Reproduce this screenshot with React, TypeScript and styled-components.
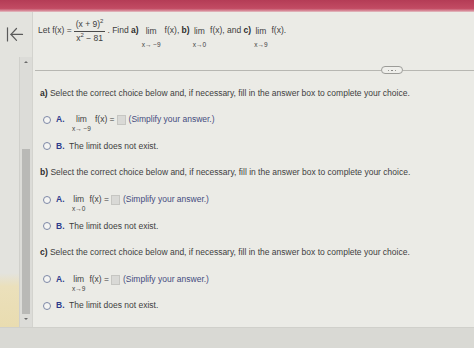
import React from "react";
import styled, { createGlobalStyle } from "styled-components";

const Global = createGlobalStyle`
  html, body { margin: 0; padding: 0; }
  body {
    width: 474px; height: 348px; overflow: hidden;
    background: #ebebe6;
    font-family: "Liberation Sans", Arial, sans-serif;
  }
`;

const Screen = styled.div`
  display: flex;
  flex-direction: column;
  width: 474px;
  height: 348px;
`;

const TopBar = styled.div`
  flex: none;
  height: 12px;
  background: linear-gradient(to bottom, #b43c56 0%, #c24b63 70%, #d98e9c 90%, #e3c3c6 100%);
`;

const Body = styled.div`
  flex: 1;
  display: flex;
  min-height: 0;
`;

const Sidebar = styled.div`
  flex: none;
  width: 32px;
  display: flex;
  flex-direction: column;
  background: #e3e3de;
  border-right: 1px solid #d3d3ce;
`;

const BackArea = styled.div`
  height: 45px;
  flex: none;
  padding: 15px 0 0 6px;
  box-sizing: border-box;
`;

const Lower = styled.div`
  flex: 1;
  display: flex;
`;

const Tint = styled.div`
  flex: 1;
  background: linear-gradient(to bottom, #e3e3de 0%, #e3e3de 80%, #ebe0bb 85%, #e9dcb0 100%);
`;

const Track = styled.div`
  width: 12px;
  flex: none;
  display: flex;
  flex-direction: column;
  align-items: center;
  background: #dcdcd8;
  border-left: 1px solid #d0d0cb;
  padding-bottom: 3px;
`;

const ArrowBtn = styled.div<{ $down?: boolean }>`
  height: 10px;
  width: 100%;
  display: flex;
  align-items: center;
  justify-content: center;
  &::after {
    content: "";
    border-left: 2px solid transparent;
    border-right: 2px solid transparent;
    ${(p) => (p.$down ? "border-top: 2px solid #6a6a6a;" : "border-bottom: 2px solid #6a6a6a;")}
  }
`;

const Thumb = styled.div`
  flex: 1;
  width: 8px;
  margin-top: 82px;
  background: #b9b9b6;
`;

const Main = styled.div`
  flex: 1;
  display: flex;
  flex-direction: column;
  padding: 7px 0 0 5px;
  color: #3e3e3e;
  font-size: 8.5px;
  line-height: 10px;
  min-width: 0;
`;

const QuestionLine = styled.div`
  height: 30px;
  display: flex;
  align-items: center;
  white-space: nowrap;
`;

const Frac = styled.span`
  display: inline-flex;
  flex-direction: column;
  align-items: stretch;
  vertical-align: middle;
  margin: 0 2px 0 2px;
  text-align: center;
`;

const FracPart = styled.span`
  line-height: 10px;
  padding: 0 2px;
`;

const FracBar = styled.span`
  height: 1px;
  background: #4a4a4a;
  margin: 2px 0 1px;
`;

const Sup = styled.sup`
  font-size: 6px;
  vertical-align: 4px;
  line-height: 0;
`;

const Lim = styled.span<{ $gap: number }>`
  display: inline-flex;
  flex-direction: column;
  align-items: center;
  margin: 0 4px 0 3px;
  & > span:last-child {
    margin-top: ${(p) => p.$gap}px;
  }
`;

const LimWord = styled.span`
  line-height: 10px;
`;

const LimSub = styled.span`
  font-size: 6.5px;
  line-height: 7px;
  white-space: nowrap;
`;

const Bold = styled.b`
  font-weight: 700;
  color: #2e2e2e;
`;

const Divider = styled.div`
  display: flex;
  align-items: center;
  height: 9px;
  margin: 18px 0 0 -3px;
`;

const Rule = styled.div<{ $w?: number }>`
  height: 1px;
  background: #b7b7b2;
  ${(p) => (p.$w ? `width: ${p.$w}px; flex: none;` : "flex: 1;")}
`;

const Pill = styled.div`
  flex: none;
  width: 20px;
  height: 6px;
  border: 1px solid #9c9c98;
  border-radius: 4px;
  display: flex;
  align-items: center;
  justify-content: center;
  gap: 2px;
  background: #efefeb;
  & > i {
    width: 1.5px;
    height: 1.5px;
    background: #7c7c78;
    border-radius: 50%;
  }
`;

const Parts = styled.div`
  margin-top: 13px;
  display: grid;
  grid-auto-rows: 26.6px;
  padding-left: 2px;
`;

const Heading = styled.div`
  white-space: nowrap;
`;

const Option = styled.div`
  display: flex;
  align-items: flex-start;
  padding-left: 3px;
  white-space: nowrap;
`;

const Radio = styled.span`
  flex: none;
  width: 6px;
  height: 6px;
  margin-top: 1.5px;
  border: 1px solid #7d88a6;
  border-radius: 50%;
  background: #f4f4f2;
`;

const Letter = styled.span`
  flex: none;
  width: 13px;
  margin-left: 5px;
  font-weight: 700;
  color: #2d3b8c;
`;

const Expr = styled.span`
  line-height: 10px;
`;

const Box = styled.span`
  display: inline-block;
  width: 9px;
  height: 10px;
  box-sizing: border-box;
  vertical-align: middle;
  margin: 0 3px 0 2px;
  background: #d9d9d6;
  border: 1px solid #c6c6c2;
`;

const Hint = styled.span`
  color: #454c80;
`;

const BottomBand = styled.div`
  flex: none;
  height: 20px;
  background: #d9d9d4;
  border-top: 1px solid #d0d0cb;
`;

const BackIcon = () => (
  <svg width="18" height="15" viewBox="0 0 18 15" fill="none" stroke="#5a5a5a" strokeWidth="1.2" strokeLinecap="round">
    <line x1="1.5" y1="0.8" x2="1.5" y2="14" />
    <line x1="5" y1="7.4" x2="16.5" y2="7.4" />
    <polyline points="10.5,1.5 5,7.4 10.5,13.3" />
  </svg>
);

const LimExpr = ({ sub, gap }: { sub: string; gap: number }) => (
  <Lim $gap={gap}>
    <LimWord>lim</LimWord>
    <LimSub>{sub}</LimSub>
  </Lim>
);

const parts = [
  { key: "a)", sub: "x\u2192 \u22129" },
  { key: "b)", sub: "x\u21920" },
  { key: "c)", sub: "x\u21929" },
];

export default function App() {
  return (
    <Screen>
      <Global />
      <TopBar />
      <Body>
        <Sidebar>
          <BackArea>
            <BackIcon />
          </BackArea>
          <Lower>
            <Tint />
            <Track>
              <ArrowBtn />
              <Thumb />
              <ArrowBtn $down />
            </Track>
          </Lower>
        </Sidebar>
        <Main>
          <QuestionLine>
            <span>
              Let f(x) =
              <Frac>
                <FracPart>
                  (x + 9)<Sup>2</Sup>
                </FracPart>
                <FracBar />
                <FracPart>
                  x<Sup>2</Sup> {"\u2212"} 81
                </FracPart>
              </Frac>
              . Find <Bold>a)</Bold>
              <LimExpr sub={"x\u2192 \u22129"} gap={5} />
              f(x), <Bold>b)</Bold>
              <LimExpr sub={"x\u21920"} gap={5} />
              f(x), and <Bold>c)</Bold>
              <LimExpr sub={"x\u21929"} gap={5} />
              f(x).
            </span>
          </QuestionLine>
          <Divider>
            <Rule $w={346} />
            <Pill>
              <i />
              <i />
              <i />
            </Pill>
            <Rule />
          </Divider>
          <Parts>
            {parts.map((p) => (
              <React.Fragment key={p.key}>
                <Heading>
                  <Bold>{p.key}</Bold> Select the correct choice below and, if necessary, fill in the answer box to
                  complete your choice.
                </Heading>
                <Option>
                  <Radio />
                  <Letter>A.</Letter>
                  <Expr>
                    <LimExpr sub={p.sub} gap={1} />
                    f(x) =<Box />
                    <Hint>(Simplify your answer.)</Hint>
                  </Expr>
                </Option>
                <Option>
                  <Radio />
                  <Letter>B.</Letter>
                  <Expr>The limit does not exist.</Expr>
                </Option>
              </React.Fragment>
            ))}
          </Parts>
        </Main>
      </Body>
      <BottomBand />
    </Screen>
  );
}
